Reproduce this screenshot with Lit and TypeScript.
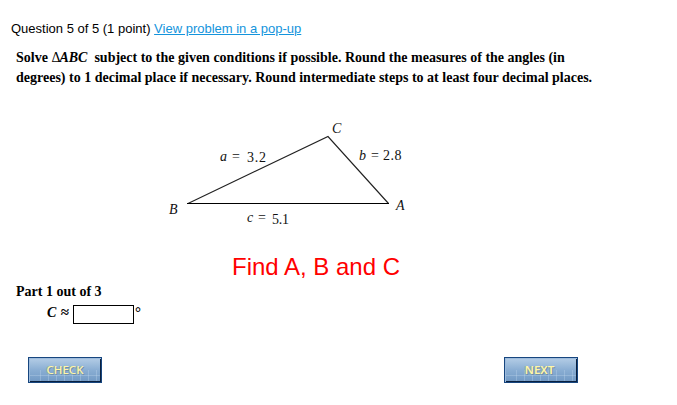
import { LitElement, html, css } from "lit";
import { customElement, property } from "lit/decorators.js";

@customElement("grid-button")
class GridButton extends LitElement {
  @property() label = "";

  static styles = css`
    :host { display: block; }
    button {
      display: flex; align-items: center; justify-content: center;
      box-sizing: border-box; width: 74px; height: 26px; margin: 0; padding: 0;
      border: 1px solid #17467f; border-radius: 0; cursor: pointer;
      box-shadow: inset 1px 1px 0 #9dbbdc, inset -1px -1px 0 #0a2140;
      background:
        repeating-linear-gradient(to right, transparent 0 7px, rgba(200,222,242,.3) 7px 8px) 4px 12px / 100% 100% no-repeat,
        repeating-linear-gradient(to bottom, transparent 0 7px, rgba(200,222,242,.3) 7px 8px) 0 10px / 100% 100% no-repeat,
        linear-gradient(#b4cde6, #8aaed3 50%, #7199c4);
      color: #fff6a6; font: 500 11.5px/14px "Noto Sans", sans-serif;
      text-shadow: 1px 1px 0 #7190a8, -1px 0 0 #89a4b5;
    }
    :host([label="NEXT"]) button { font-weight: 600; padding-right: 3px; }
  `;

  render() { return html`<button type="button"><span>${this.label}</span></button>`; }
}

@customElement("triangle-figure")
class TriangleFigure extends LitElement {
  static styles = css`
    :host { display: block; height: 190px; }
    svg { display: block; }
    .edge { fill: none; stroke: #222; stroke-width: 1.15; }
    .base { stroke: #000; stroke-width: 1; shape-rendering: crispEdges; }
    text { font: 14px "Liberation Serif", serif; fill: #111; }
    .v { font-style: italic; }
    .find { font: 24px "Liberation Sans", sans-serif; fill: #f00; }
  `;

  render() {
    return html`
      <svg width="677" height="190" viewBox="0 95 677 190">
        <path class="edge" d="M188 203.5L328 136.5L388.500 203.500" />
        <path class="base" d="M187 203.500H389" />
        <text class="v" x="332" y="133">C</text>
        <text class="v" x="169" y="214">B</text>
        <text class="v" x="396" y="210">A</text>
        <text class="v" x="220" y="161">a</text><text x="232" y="161">=</text>
        <text x="247" y="162" textLength="19">3.2</text>
        <text class="v" x="359" y="160">b</text><text x="371" y="160">=</text>
        <text x="383" y="160" textLength="18.500">2.8</text>
        <text class="v" x="247" y="222">c</text><text x="258" y="222">=</text>
        <text x="272" y="224" textLength="17">5.1</text>
        <text class="find" x="232" y="275" textLength="168">Find A, B and C</text>
      </svg>
    `;
  }
}

@customElement("app-root")
class AppRoot extends LitElement {
  static styles = css`
    :host {
      display: flex; flex-direction: column; box-sizing: border-box;
      width: 677px; height: 405px; overflow: hidden; background: #fff; color: #000;
      font: bold 14px/20px "Liberation Serif", serif;
    }
    header {
      height: 48px; box-sizing: border-box; padding: 21px 0 0 11px;
      font: 13px/16px "Liberation Sans", sans-serif; white-space: pre;
    }
    a { color: #1494dc; text-decoration: underline; }
    .prompt { height: 47px; padding-left: 16px; white-space: pre; }
    .tri { font-weight: normal; margin-right: -1px; }
    i { font-style: italic; }
    .part { padding-left: 16px; margin-top: -3px; height: 21px; }
    .answer { display: flex; padding-left: 47px; height: 22px; }
    .lhs { width: 26px; white-space: pre; }
    .approx { margin-left: 1px; font-size: 15px; line-height: 18px; }
    input {
      box-sizing: border-box; width: 61px; height: 19px; margin: 2px 0 0; padding: 1px 3px;
      border: 1px solid #000; border-radius: 0; background: #fff; outline: none;
    }
    .deg { font-size: 15px; padding-left: 1px; margin-top: -1px; }
    footer { display: flex; justify-content: space-between; width: 550px; margin: 32px 0 0 28px; }
  `;

  render() {
    return html`
      <header>Question 5 of 5 (1 point) <a href="#">View problem in a pop-up</a></header>
      <div class="prompt"><div>Solve <span class="tri">Δ</span><i>ABC</i>  subject to the given conditions if possible. Round the measures of the angles (in</div><div>degrees) to 1 decimal place if necessary. Round intermediate steps to at least four decimal places.</div></div>
      <triangle-figure></triangle-figure>
      <div class="part">Part 1 out of 3</div>
      <div class="answer"><span class="lhs"><i>C</i> <span class="approx">≈</span></span><input type="text" aria-label="Angle C in degrees" /><span class="deg">°</span></div>
      <footer><grid-button label="CHECK"></grid-button><grid-button label="NEXT"></grid-button></footer>
    `;
  }
}
